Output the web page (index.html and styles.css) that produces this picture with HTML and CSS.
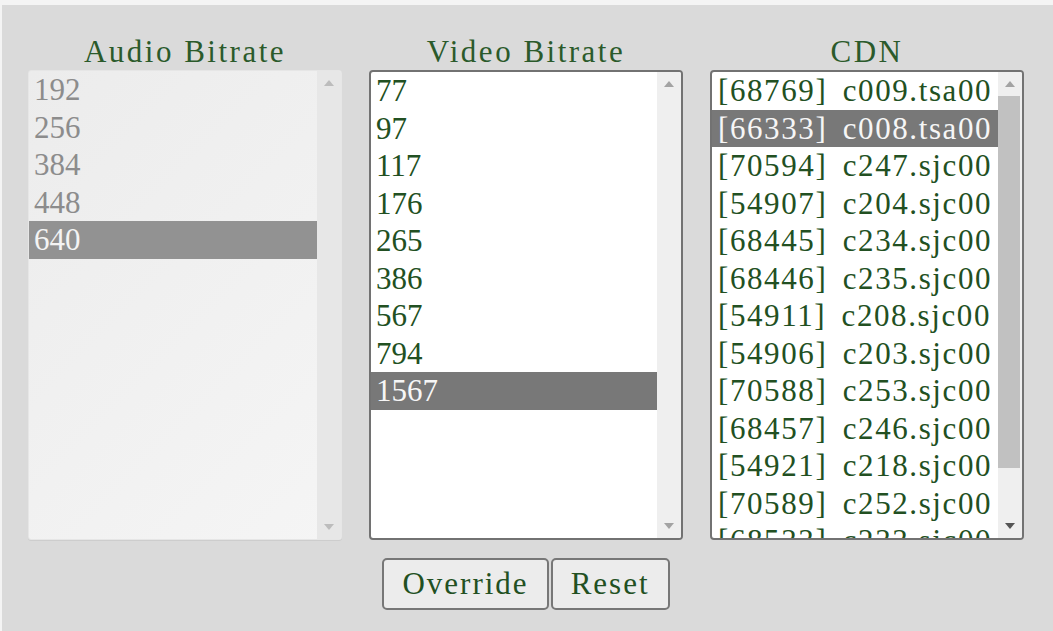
FILE: index.html
```html
<!DOCTYPE html>
<html lang="en">

<head>
    <meta charset="UTF-8" />
    <title>Stream Manager</title>
    <link rel="stylesheet" href="styles.css">
</head>

<body>
    <div class="panel">
        <div class="oszlop">
            <div class="cim">Audio Bitrate</div>
            <div class="lista tiltott">
                <div class="elemek">
                    <div class="elem">192</div>
                    <div class="elem">256</div>
                    <div class="elem">384</div>
                    <div class="elem">448</div>
                    <div class="elem kijelolt">640</div>
                </div>
                <div class="sav">
                    <span class="nyil"><i class="fel"></i></span>
                    <span class="ures"></span>
                    <span class="nyil"><i class="le"></i></span>
                </div>
            </div>
        </div>

        <div class="oszlop">
            <div class="cim">Video Bitrate</div>
            <div class="lista">
                <div class="elemek">
                    <div class="elem">77</div>
                    <div class="elem">97</div>
                    <div class="elem">117</div>
                    <div class="elem">176</div>
                    <div class="elem">265</div>
                    <div class="elem">386</div>
                    <div class="elem">567</div>
                    <div class="elem">794</div>
                    <div class="elem kijelolt">1567</div>
                </div>
                <div class="sav">
                    <span class="nyil"><i class="fel"></i></span>
                    <span class="ures"></span>
                    <span class="nyil"><i class="le"></i></span>
                </div>
            </div>
        </div>

        <div class="oszlop">
            <div class="cim">CDN</div>
            <div class="lista cdn">
                <div class="elemek">
                    <div class="elem">[68769] c009.tsa00</div>
                    <div class="elem kijelolt">[66333] c008.tsa00</div>
                    <div class="elem">[70594] c247.sjc00</div>
                    <div class="elem">[54907] c204.sjc00</div>
                    <div class="elem">[68445] c234.sjc00</div>
                    <div class="elem">[68446] c235.sjc00</div>
                    <div class="elem">[54911] c208.sjc00</div>
                    <div class="elem">[54906] c203.sjc00</div>
                    <div class="elem">[70588] c253.sjc00</div>
                    <div class="elem">[68457] c246.sjc00</div>
                    <div class="elem">[54921] c218.sjc00</div>
                    <div class="elem">[70589] c252.sjc00</div>
                    <div class="elem">[68533] c233.sjc00</div>
                </div>
                <div class="sav">
                    <span class="nyil"><i class="fel"></i></span>
                    <span class="fogo"></span>
                    <span class="ures"></span>
                    <span class="nyil aktiv"><i class="le"></i></span>
                </div>
            </div>
        </div>

        <div class="gombok">
            <button>Override</button>
            <button>Reset</button>
        </div>
    </div>
</body>

</html>
```

FILE: styles.css
```css
body {
    margin: 0;
    background: #f4f4f4;
    font-family: "Liberation Serif", "Times New Roman", serif;
}

.panel {
    margin: 5px 0 0 2px;
    min-height: calc(100vh - 5px);
    box-sizing: border-box;
    background: #dadada;
    padding: 29px 0 0 26px;
    display: grid;
    grid-template-columns: 314px 314px 314px;
    column-gap: 27px;
    align-content: start;
}

.cim {
    text-align: center;
    font-size: 31px;
    line-height: 36px;
    letter-spacing: 2.5px;
    color: #2b5a2b;
}

.lista {
    display: flex;
    height: 470px;
    box-sizing: border-box;
    background: white;
    border: 2px solid #727272;
    border-radius: 4px;
    overflow: hidden;
}

.lista.tiltott {
    border: 1px solid #e6e6e6;
    border-radius: 3px;
    background: linear-gradient(135deg, #ececec, #f5f5f5);
    box-shadow: 0 1px 0 #cdcdcd;
}

.elemek {
    flex: 1;
    min-width: 0;
    overflow: hidden;
}

.elem {
    font-size: 31px;
    line-height: 37.5px;
    height: 37.5px;
    padding-left: 5px;
    color: #225022;
    white-space: nowrap;
}

.cdn .elem {
    padding-left: 6px;
    letter-spacing: 1.6px;
    word-spacing: 6px;
}

.elem.kijelolt {
    background: #787878;
    color: #f6f6f6;
}

.tiltott .elem {
    color: #8c8c8c;
}

.tiltott .elem.kijelolt {
    background: #929292;
    color: #f4f4f4;
}

.sav {
    width: 24px;
    display: flex;
    flex-direction: column;
    background: #efefef;
}

.tiltott .sav {
    background: #e7e7e7;
}

.nyil {
    height: 24px;
    display: flex;
    align-items: center;
    justify-content: center;
}

.nyil i {
    width: 0;
    height: 0;
    border-left: 5px solid transparent;
    border-right: 5px solid transparent;
}

.nyil .fel {
    border-bottom: 6px solid #a3a3a3;
}

.nyil .le {
    border-top: 6px solid #a3a3a3;
}

.tiltott .nyil .fel {
    border-bottom-color: #bcbcbc;
}

.tiltott .nyil .le {
    border-top-color: #bcbcbc;
}

.nyil.aktiv .le {
    border-top-color: #555;
}

.fogo {
    height: 372px;
    margin-right: 2px;
    background: #c1c1c1;
}

.ures {
    flex: 1;
}

.gombok {
    grid-column: 2;
    display: flex;
    justify-content: center;
    gap: 2px;
    margin-top: 18px;
}

button {
    height: 52px;
    padding: 0 18px;
    font-family: "Liberation Serif", "Times New Roman", serif;
    font-size: 31px;
    letter-spacing: 2px;
    color: #225022;
    background: #ececec;
    border: 2px solid #777;
    border-radius: 5px;
}
```
